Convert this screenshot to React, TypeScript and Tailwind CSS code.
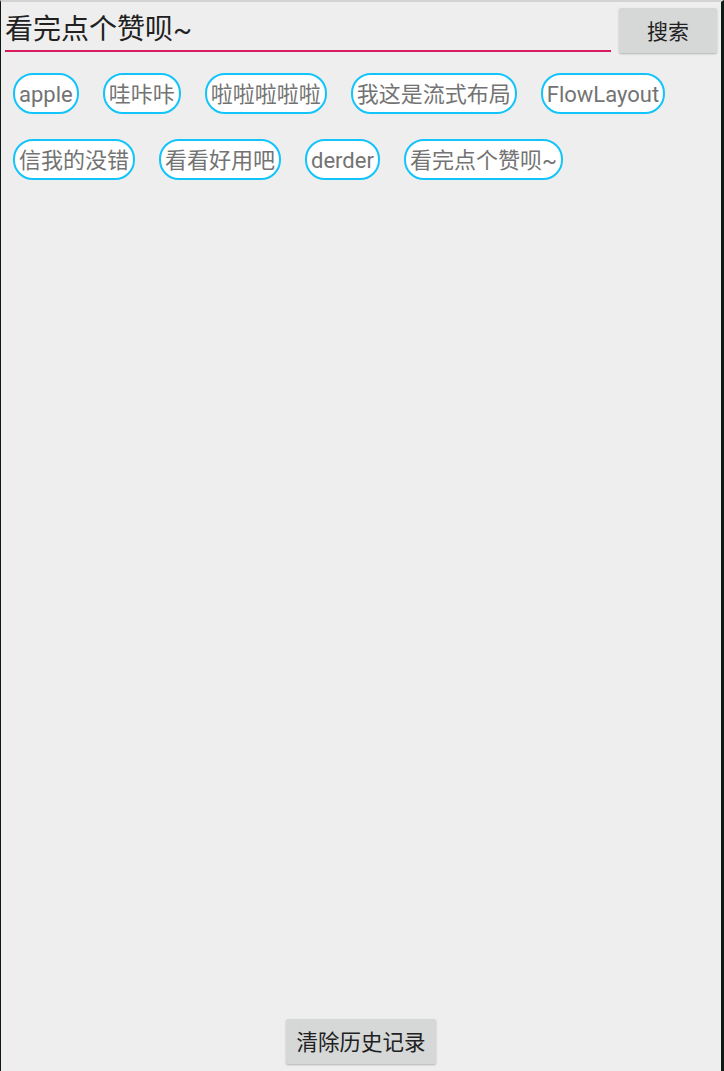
import React from "react";

const row1 = ["apple", "哇咔咔", "啦啦啦啦啦", "我这是流式布局", "FlowLayout"];
const row2 = ["信我的没错", "看看好用吧", "derder", "看完点个赞呗~"];

const font = { fontFamily: "Roboto, 'Noto Sans CJK SC', sans-serif" };

function Chip({ label }: { label: string }) {
  return (
    <div className="h-[41px] px-[4px] pt-[3px] border-2 border-[#12c4fa] rounded-[20px] bg-white text-[#737373] text-[22px] leading-none flex items-center whitespace-nowrap">
      {label}
    </div>
  );
}

export default function App() {
  return (
    <div
      className="w-[724px] h-[1071px] bg-[#eeeeee] border-l border-l-[#0f1a14] border-r-[3px] border-r-[#0f1a14] border-t-2 border-t-[#d3d3d3] flex flex-col overflow-hidden"
      style={font}
    >
      <div className="flex items-start">
        <div className="ml-[4px] w-[606px] pt-[14px] pb-[6px] border-b-2 border-b-[#d81b60] text-[28px] leading-[28px] text-[#212121] whitespace-nowrap">
          看完点个赞呗~
        </div>
        <button className="ml-[8px] mt-[6px] w-[98px] h-[45px] pt-[4px] bg-[#d6d7d7] rounded-[2px] shadow-[0_1px_2px_rgba(0,0,0,0.25)] text-[21px] leading-none text-[#212121] flex items-center justify-center">
          搜索
        </button>
      </div>
      <div className="mt-[20px] pl-[12px] flex flex-col gap-[25px]">
        <div className="flex gap-[24px]">
          {row1.map((t) => (
            <Chip key={t} label={t} />
          ))}
        </div>
        <div className="flex gap-[24px]">
          {row2.map((t) => (
            <Chip key={t} label={t} />
          ))}
        </div>
      </div>
      <button className="mt-auto mb-[7px] self-center w-[150px] h-[45px] pt-[3px] bg-[#d6d7d7] rounded-[2px] shadow-[0_1px_2px_rgba(0,0,0,0.25)] text-[21.5px] leading-none text-[#212121] flex items-center justify-center">
        清除历史记录
      </button>
    </div>
  );
}
